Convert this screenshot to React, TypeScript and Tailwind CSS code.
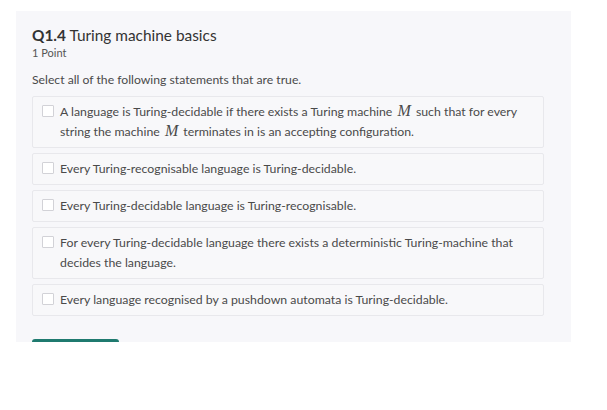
import React from "react";

const M = () => (
  <span className="font-['Liberation_Serif',serif] italic text-[16px] leading-[0] px-[2px]">M</span>
);

const Option = ({ children }: { children: React.ReactNode }) => (
  <div className="flex items-start border-[1.5px] border-[#e8e8ec] bg-[#f8f8fa] rounded-[2px] pl-[9px] py-[5px]">
    <div className="mt-[3px] w-[12px] h-[12px] shrink-0 border border-[#d2d2d7] bg-white rounded-[1px]" />
    <div className="ml-[6px] text-[12.3px] leading-[20px] text-[#4a4a4a] whitespace-nowrap">{children}</div>
  </div>
);

export default function App() {
  return (
    <div className="w-[607px] h-[410px] bg-white font-['Lato',sans-serif] pt-[11px] pl-[16px]">
      <div className="w-[555px] h-[331px] bg-[#f7f7fa] overflow-hidden pl-[16px] pt-[14px]">
        <div className="text-[15.4px] leading-[20px] text-[#333]">
          <span className="font-bold">Q1.4</span> Turing machine basics
        </div>
        <div className="text-[11px] leading-[14px] text-[#555] mt-[1px]">1 Point</div>
        <div className="text-[12.2px] leading-[16px] text-[#4a4a4a] mt-[12px]">
          Select all of the following statements that are true.
        </div>
        <div className="w-[512px] mt-[8px] flex flex-col gap-[5px]">
          <Option>
            A language is Turing-decidable if there exists a Turing machine <M /> such that for every
            <br />
            string the machine <M /> terminates in is an accepting configuration.
          </Option>
          <Option>Every Turing-recognisable language is Turing-decidable.</Option>
          <Option>Every Turing-decidable language is Turing-recognisable.</Option>
          <Option>
            For every Turing-decidable language there exists a deterministic Turing-machine that
            <br />
            decides the language.
          </Option>
          <Option>Every language recognised by a pushdown automata is Turing-decidable.</Option>
        </div>
        <div className="mt-[23px] w-[87px] h-[30px] bg-[#1f7a6f] rounded-[3px]" />
      </div>
    </div>
  );
}
